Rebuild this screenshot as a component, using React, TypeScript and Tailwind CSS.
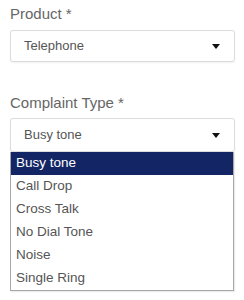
import React from "react";

const options = ["Busy tone", "Call Drop", "Cross Talk", "No Dial Tone", "Noise", "Single Ring"];

function Caret() {
  return (
    <svg width="8" height="5" viewBox="0 0 8 5" className="shrink-0">
      <path d="M0 0 H8 L4 5 Z" fill="#111" />
    </svg>
  );
}

function FakeSelect({ value, className }: { value: string; className?: string }) {
  return (
    <div
      className={`flex items-center justify-between pl-[13px] pr-[14px] bg-white border border-[#dcdcdc] rounded-[3px] shadow-[0_1px_2px_rgba(0,0,0,0.06)] text-[13px] text-[#555] ${className ?? ""}`}
    >
      <span>{value}</span>
      <Caret />
    </div>
  );
}

export default function App() {
  const selected = "Busy tone";

  return (
    <div className="w-[244px] h-[300px] bg-white pl-[10px] pr-[9px] pt-[4px] font-['Liberation_Sans',Arial,sans-serif]">
      <label className="block text-[15px] leading-[20px] text-[#666]">Product *</label>
      <FakeSelect value="Telephone" className="mt-[6px] h-[32px]" />

      <label className="block mt-[31px] text-[15px] leading-[20px] text-[#666]">Complaint Type *</label>
      <div className="relative mt-[5px]">
        <FakeSelect value={selected} className="h-[34px]" />
        <ul className="w-[224px] border border-t-0 border-[#a8a8a8] bg-white shadow-[1px_1px_1px_rgba(0,0,0,0.08)]">
          {options.map((opt) => (
            <li
              key={opt}
              className={`h-[23px] flex items-center pl-[5px] text-[13.5px] ${
                opt === selected ? "bg-[#132565] text-white" : "text-[#555]"
              }`}
            >
              {opt}
            </li>
          ))}
        </ul>
      </div>
    </div>
  );
}
